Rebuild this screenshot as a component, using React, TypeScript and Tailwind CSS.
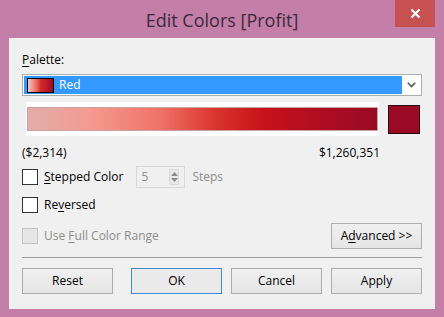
import React from "react";

const ui = { fontFamily: '"Open Sans", "Noto Sans", sans-serif' };

function Check({ disabled }: { disabled?: boolean }) {
  return (
    <span
      className={`h-[16px] w-[16px] shrink-0 border ${
        disabled ? "border-[#c4c4c4] bg-[#e6e6e6]" : "border-[#333333] bg-white"
      }`}
    />
  );
}

function Btn({ label, primary }: { label: React.ReactNode; primary?: boolean }) {
  return (
    <button
      className={`flex h-[26px] w-[91px] items-center justify-center border text-[12px] text-black ${
        primary
          ? "border-[#3c8ad6] bg-[#eaeaea]"
          : "border-[#adadad] bg-gradient-to-b from-[#f0f0f0] to-[#e5e5e5]"
      }`}
    >
      {label}
    </button>
  );
}

export default function App() {
  return (
    <div className="flex h-[317px] w-[444px] flex-col bg-[#c47fa8]" style={ui}>
      {/* Title bar */}
      <div className="relative flex h-[38px] items-center justify-center">
        <span className="pt-[2px] text-[18px] text-[#3b2a3b]">Edit Colors [Profit]</span>
        <div className="absolute right-[9px] top-0 flex h-[27px] w-[40px] items-center justify-center bg-[#c75050]">
          <svg width="11" height="11" viewBox="0 0 11 11">
            <path d="M1.5 1.5 L9.5 9.5 M9.5 1.5 L1.5 9.5" stroke="white" strokeWidth="2.2" />
          </svg>
        </div>
      </div>

      {/* Client area */}
      <div className="mx-[9px] flex h-[271px] flex-col bg-[#f0f0f0] px-[13px] text-[12px] text-black">
        <div className="mt-[13px] h-[18px] leading-[18px]">
          <span className="underline underline-offset-2">P</span>alette:
        </div>

        {/* Dropdown */}
        <div className="mt-[5px] flex h-[22px] items-stretch border border-[#acacac] bg-white p-[1px]">
          <div className="flex flex-1 items-center gap-[5px] bg-[#3399ff] pl-[3px] text-white">
            <span className="h-[15px] w-[27px] border border-black bg-gradient-to-r from-[#f4c6c2] via-[#d82a2a] to-[#9b0a25]" />
            <span>Red</span>
          </div>
          <div className="flex w-[18px] items-center justify-center">
            <svg width="9" height="6" viewBox="0 0 9 6">
              <path d="M0.8 0.8 L4.5 4.6 L8.2 0.8" stroke="#555" strokeWidth="1.6" fill="none" />
            </svg>
          </div>
        </div>

        {/* Gradient */}
        <div className="mt-[6px] flex h-[34px] items-center">
          <div className="ml-[4px] flex h-[34px] w-[353px] items-center bg-white px-[1px] py-[5px]">
            <div className="h-full w-full border border-[#c9a0a0] bg-[linear-gradient(to_right,#e2adaa_0%,#f49a90_18%,#ee7266_38%,#d8302a_55%,#c7121a_68%,#ad0d22_85%,#990a24_100%)]" />
          </div>
          <div className="ml-[9px] h-[29px] w-[32px] border border-[#2a0a10] bg-[#9b0a25]" />
        </div>

        <div className="mt-[8px] flex h-[18px] items-center">
          <span>($2,314)</span>
          <span className="ml-auto mr-[42px]">$1,260,351</span>
        </div>

        {/* Stepped color */}
        <div className="mt-[4px] flex h-[22px] items-center">
          <Check />
          <span className="ml-[6px]">
            <span className="underline underline-offset-2">S</span>tepped Color
          </span>
          <div className="ml-[13px] flex h-[22px] w-[49px] items-center border border-[#d9d9d9] bg-[#f0f0f0] pl-[4px] text-[#8c8c8c]">
            <span className="flex-1">5</span>
            <div className="mr-[5px] flex h-[16px] w-[10px] flex-col items-center justify-center gap-[2px] border border-[#d9d9d9] bg-[#e8e8e8]">
              <svg width="7" height="4" viewBox="0 0 7 4">
                <path d="M0 4 L3.5 0 L7 4 Z" fill="#8a8a8a" />
              </svg>
              <svg width="7" height="4" viewBox="0 0 7 4">
                <path d="M0 0 L3.5 4 L7 0 Z" fill="#8a8a8a" />
              </svg>
            </div>
          </div>
          <span className="ml-[7px] text-[#8c8c8c]">Steps</span>
        </div>

        {/* Reversed */}
        <div className="mt-[8px] flex h-[18px] items-center">
          <Check />
          <span className="ml-[6px]">
            Re<span className="underline underline-offset-2">v</span>ersed
          </span>
        </div>

        {/* Full color range + Advanced */}
        <div className="mt-[9px] flex h-[26px] items-center">
          <Check disabled />
          <span className="ml-[6px] text-[#8c8c8c]">
            Use <span className="underline underline-offset-2">F</span>ull Color Range
          </span>
          <div className="ml-auto">
            <Btn
              label={
                <span>
                  A<span className="underline underline-offset-2">d</span>vanced &gt;&gt;
                </span>
              }
            />
          </div>
        </div>

        <div className="mt-[8px] h-[1px] bg-[#a0a0a0]" />

        <div className="mt-[10px] flex justify-between">
          <Btn label="Reset" />
          <div className="flex gap-[9px]">
            <Btn label="OK" primary />
            <Btn label="Cancel" />
            <Btn label="Apply" />
          </div>
        </div>
      </div>
    </div>
  );
}
